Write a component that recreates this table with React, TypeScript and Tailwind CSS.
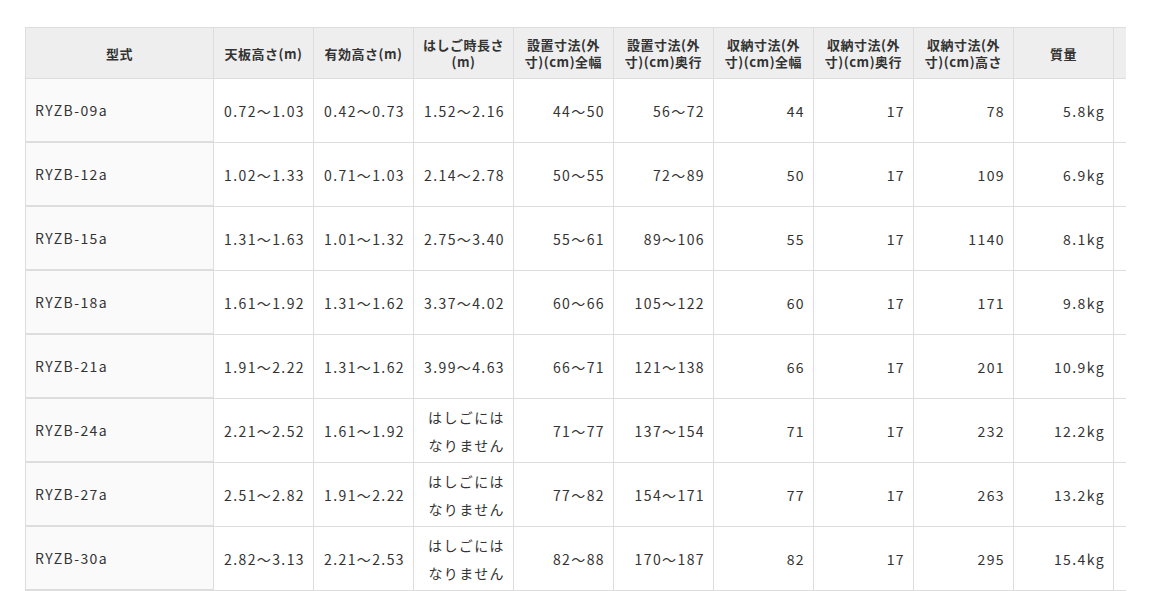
import React from "react";

const heads: string[][] = [
  ["型式"],
  ["天板高さ(m)"],
  ["有効高さ(m)"],
  ["はしご時長さ", "(m)"],
  ["設置寸法(外", "寸)(cm)全幅"],
  ["設置寸法(外", "寸)(cm)奥行"],
  ["収納寸法(外", "寸)(cm)全幅"],
  ["収納寸法(外", "寸)(cm)奥行"],
  ["収納寸法(外", "寸)(cm)高さ"],
  ["質量"],
  [""],
];

const NL = "はしごにはなりません";

const rows: string[][] = [
  ["RYZB-09a", "0.72～1.03", "0.42～0.73", "1.52～2.16", "44～50", "56～72", "44", "17", "78", "5.8kg"],
  ["RYZB-12a", "1.02～1.33", "0.71～1.03", "2.14～2.78", "50～55", "72～89", "50", "17", "109", "6.9kg"],
  ["RYZB-15a", "1.31～1.63", "1.01～1.32", "2.75～3.40", "55～61", "89～106", "55", "17", "1140", "8.1kg"],
  ["RYZB-18a", "1.61～1.92", "1.31～1.62", "3.37～4.02", "60～66", "105～122", "60", "17", "171", "9.8kg"],
  ["RYZB-21a", "1.91～2.22", "1.31～1.62", "3.99～4.63", "66～71", "121～138", "66", "17", "201", "10.9kg"],
  ["RYZB-24a", "2.21～2.52", "1.61～1.92", NL, "71～77", "137～154", "71", "17", "232", "12.2kg"],
  ["RYZB-27a", "2.51～2.82", "1.91～2.22", NL, "77～82", "154～171", "77", "17", "263", "13.2kg"],
  ["RYZB-30a", "2.82～3.13", "2.21～2.53", NL, "82～88", "170～187", "82", "17", "295", "15.4kg"],
];

export default function App() {
  return (
    <div
      className="min-h-screen bg-white pt-[27px] pl-[25px] text-[#333]"
      style={{ fontFamily: '"Noto Sans CJK JP", "Noto Sans", sans-serif' }}
    >
      <div className="w-[1101px] overflow-hidden">
        <table className="table-fixed w-[1188px] border-separate border-spacing-0 border-l border-[#ddd]">
          <colgroup>
            <col className="w-[188px]" />
            {heads.slice(1).map((_, i) => (
              <col key={i} className="w-[100px]" />
            ))}
          </colgroup>
          <thead>
            <tr>
              {heads.map((h, i) => (
                <th
                  key={i}
                  className="h-[52px] bg-[#eeeeee] border-t border-r border-b border-[#ddd] px-[4px] text-center align-middle text-[13px] font-bold leading-[17px] tracking-[0.04em] whitespace-nowrap"
                >
                  {h.map((line, j) => (
                    <div key={j}>{line}</div>
                  ))}
                </th>
              ))}
            </tr>
          </thead>
          <tbody>
            {rows.map((r) => (
              <tr key={r[0]}>
                <td className="h-[64px] bg-[#fafafa] border-r border-b-2 border-[#ddd] px-[9px] text-left align-middle text-[14px] tracking-[0.1em]">
                  {r[0]}
                </td>
                {r.slice(1).map((c, i) => (
                  <td
                    key={i}
                    className="h-[64px] border-r border-b border-[#ddd] pl-[10px] pr-[8px] text-right align-middle text-[14px] leading-[28px] tracking-[0.1em]"
                  >
                    {c}
                  </td>
                ))}
                <td className="h-[64px] border-r border-b border-[#ddd]"></td>
              </tr>
            ))}
          </tbody>
        </table>
      </div>
    </div>
  );
}
